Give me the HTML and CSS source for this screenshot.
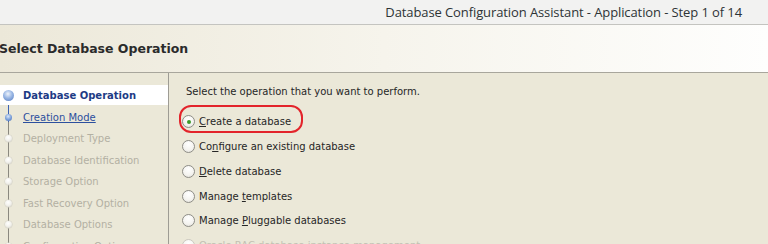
FILE: index.html
```html
<!DOCTYPE html>
<html>
<head>
<meta charset="utf-8">
<link rel="stylesheet" href="styles.css">
</head>
<body>
<div class="window">
  <div class="titlebar"><span class="title">Database Configuration Assistant - Application - Step 1 of 14</span></div>
  <div class="header"><span class="heading">Select Database Operation</span></div>
  <div class="main">
    <div class="sidebar">
      <div class="step current"><span class="dot big"></span><span class="label">Database Operation</span></div>
      <div class="step link"><span class="dot blue"></span><span class="label">Creation Mode</span></div>
      <div class="step"><span class="dot"></span><span class="label">Deployment Type</span></div>
      <div class="step"><span class="dot"></span><span class="label">Database Identification</span></div>
      <div class="step"><span class="dot"></span><span class="label">Storage Option</span></div>
      <div class="step"><span class="dot"></span><span class="label">Fast Recovery Option</span></div>
      <div class="step"><span class="dot"></span><span class="label">Database Options</span></div>
      <div class="step"><span class="dot"></span><span class="label">Configuration Options</span></div>
      <span class="track blue-track"></span>
      <span class="track gray-track"></span>
    </div>
    <div class="content">
      <p class="prompt">Select the operation that you want to perform.</p>
      <div class="options">
        <div class="opt"><span class="radio checked"></span><span><u>C</u>reate a database</span></div>
        <div class="opt"><span class="radio"></span><span>Co<u>n</u>figure an existing database</span></div>
        <div class="opt"><span class="radio"></span><span><u>D</u>elete database</span></div>
        <div class="opt"><span class="radio"></span><span>Manage <u>t</u>emplates</span></div>
        <div class="opt"><span class="radio"></span><span>Manage <u>P</u>luggable databases</span></div>
        <div class="opt disabled"><span class="radio"></span><span>Oracle RAC database instance management</span></div>
      </div>
      <span class="highlight"></span>
    </div>
  </div>
</div>
</body>
</html>
```
FILE: styles.css
```css
html, body {
  margin: 0;
  padding: 0;
  width: 768px;
  height: 244px;
  overflow: hidden;
  background: #ebe8d8;
}
.window {
  display: flex;
  flex-direction: column;
  height: 244px;
  font-family: "DejaVu Sans", sans-serif;
}
.titlebar {
  height: 24px;
  flex: none;
  background: #f2f2f1;
  border-bottom: 1px solid #c4c4c0;
  display: flex;
  justify-content: flex-end;
  align-items: center;
}
.title {
  font-family: "Open Sans", "Noto Sans", sans-serif;
  font-size: 13px;
  color: #2e3436;
  padding-right: 26px;
  letter-spacing: -0.1px;
}
.header {
  height: 47px;
  flex: none;
  background: linear-gradient(to right, #ece8d9 0%, #f6f4ec 50%, #fefefd 100%);
  border-bottom: 1px solid #a8a69c;
  display: flex;
  align-items: center;
}
.heading {
  font-weight: bold;
  font-size: 12.5px;
  color: #2b2b2b;
  margin-left: -1px;
}
.main {
  flex: 1;
  display: flex;
  min-height: 0;
}
.sidebar {
  position: relative;
  width: 168px;
  flex: none;
  border-right: 1px solid #9e9c94;
  padding-top: 12px;
  font-size: 10px;
}
.step {
  position: relative;
  height: 21.5px;
  display: flex;
  align-items: center;
  padding-left: 23px;
  color: #b3b0a3;
  z-index: 1;
}
.step.current {
  background: #ffffff;
  color: #1d3b85;
  font-weight: bold;
  height: 20px;
  margin-bottom: 1.5px;
}
.step.link .label {
  color: #2c4f9e;
  text-decoration: underline;
}
.dot {
  position: absolute;
  left: 5px;
  top: 50%;
  width: 7px;
  height: 7px;
  margin-top: -3.5px;
  border-radius: 50%;
  background: radial-gradient(circle at 45% 35%, #ffffff 0%, #f2f1ec 50%, #c9c7bd 100%);
  box-shadow: 0 0 0 0.5px #d2d0c6;
}
.dot.blue {
  background: radial-gradient(circle at 45% 35%, #dce7f7 0%, #7fa3db 50%, #3f67b5 100%);
  box-shadow: none;
}
.dot.big {
  left: 3px;
  width: 11px;
  height: 11px;
  margin-top: -5.5px;
  background: radial-gradient(circle at 45% 35%, #eef3fb 0%, #9ab7e4 45%, #4f77c0 100%);
  box-shadow: none;
}
.track {
  position: absolute;
  left: 8px;
  width: 1px;
  z-index: 0;
}
.blue-track {
  top: 28px;
  height: 21px;
  background: #3e63b3;
}
.gray-track {
  top: 49px;
  height: 140px;
  background: #8a887f;
}
.content {
  position: relative;
  flex: 1;
  padding-left: 17px;
  font-size: 10px;
  color: #262626;
}
.prompt {
  margin: 13px 0 0 0;
  line-height: 12px;
}
.options {
  display: flex;
  flex-direction: column;
  gap: 11.3px;
  margin-top: 17px;
  margin-left: -4px;
}
.opt {
  display: flex;
  align-items: center;
  gap: 4px;
  height: 13.5px;
}
.opt u {
  text-decoration-thickness: 1px;
  text-underline-offset: 1px;
}
.radio {
  width: 11px;
  height: 11px;
  border-radius: 50%;
  border: 1px solid #8e8d87;
  background: radial-gradient(circle at 50% 30%, #ffffff 0%, #f4f3ef 60%, #dddbd3 100%);
  position: relative;
  flex: none;
}
.radio.checked::after {
  content: "";
  position: absolute;
  left: 3.5px;
  top: 3.5px;
  width: 4px;
  height: 4px;
  border-radius: 50%;
  background: #3c9a2a;
}
.opt.disabled {
  color: #c3c0b3;
}
.opt.disabled .radio {
  border-color: #cbc9c0;
}
.highlight {
  position: absolute;
  left: 10px;
  top: 32px;
  width: 120px;
  height: 24px;
  border: 2px solid #e3242b;
  border-radius: 12px;
}
```
